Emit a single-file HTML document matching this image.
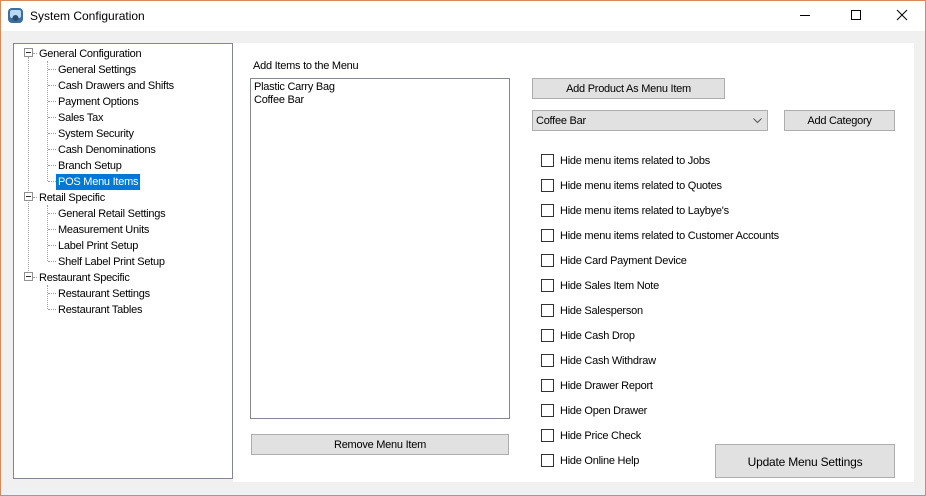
<!DOCTYPE html>
<html><head><meta charset="utf-8"><style>
*{margin:0;padding:0;box-sizing:border-box}
body{width:926px;height:496px;overflow:hidden;background:#f0f0f0;font-family:"Liberation Sans",Arial,sans-serif;font-size:11px;letter-spacing:-0.25px;color:#000;position:relative}
.a{position:absolute}
.win{left:0;top:0;width:926px;height:496px;border:1px solid #d9885a}
.title{left:1px;top:1px;width:924px;height:30px;background:#fff}
.btn{position:absolute;background:#e1e1e1;border:1px solid #adadad;font-size:11px;display:flex;align-items:center;justify-content:center;padding-top:1px}
.cb{position:absolute;left:541px;width:13px;height:13px;border:1px solid #333;background:#fff}
.cl{position:absolute;left:560px}
.t{position:absolute;white-space:nowrap;line-height:14px}
.vd{position:absolute;border-left:1px dotted #a0a0a0;width:0}
.hd{position:absolute;border-top:1px dotted #a0a0a0;height:0}
.pm{position:absolute;width:9px;height:9px;border:1px solid #919191;background:#fff}
.pm:after{content:"";position:absolute;left:1px;top:3px;width:5px;height:1px;background:#333}
</style></head><body>
<div class="a win"></div>
<div class="a title"></div>
<svg class="a" style="left:7px;top:7px" width="17" height="17" viewBox="0 0 17 17"><rect x="1" y="1" width="15" height="15" rx="4" fill="#3d6f9e"/><rect x="3" y="3" width="11" height="8" rx="2" fill="#b9d8f2"/><circle cx="8.5" cy="11" r="3" fill="#2a4d70"/></svg>
<div class="t" style="left:30px;top:9px;font-size:12px;letter-spacing:0">System Configuration</div>
<div class="a" style="left:800px;top:15px;width:10px;height:1px;background:#000"></div>
<div class="a" style="left:851px;top:10px;width:10px;height:10px;border:1px solid #000"></div>
<svg class="a" style="left:896px;top:9px" width="12" height="12"><path d="M1 1L11 11M11 1L1 11" stroke="#000" stroke-width="1"/></svg>

<div class="a" style="left:13px;top:43px;width:220px;height:436px;background:#fff;border:1px solid #828790"></div>
<div class="a" style="left:233px;top:43px;width:681px;height:439px;background:#fff"></div>

<div class="vd" style="left:28px;top:57px;height:222px"></div>
<div class="vd" style="left:47px;top:61px;height:120px"></div>
<div class="vd" style="left:47px;top:205px;height:56px"></div>
<div class="vd" style="left:47px;top:285px;height:24px"></div>
<div class="pm" style="left:24px;top:48px"></div>
<div class="pm" style="left:24px;top:192px"></div>
<div class="pm" style="left:24px;top:272px"></div>
<div class="hd" style="left:33px;top:53px;width:4px"></div>
<div class="hd" style="left:33px;top:197px;width:4px"></div>
<div class="hd" style="left:33px;top:277px;width:4px"></div>
<div class="t" style="left:39px;top:47px">General Configuration</div>
<div class="t" style="left:39px;top:191px">Retail Specific</div>
<div class="t" style="left:39px;top:271px">Restaurant Specific</div>
<div class="hd" style="left:48px;top:69px;width:8px"></div><div class="t" style="left:58px;top:63px">General Settings</div>
<div class="hd" style="left:48px;top:85px;width:8px"></div><div class="t" style="left:58px;top:79px">Cash Drawers and Shifts</div>
<div class="hd" style="left:48px;top:101px;width:8px"></div><div class="t" style="left:58px;top:95px">Payment Options</div>
<div class="hd" style="left:48px;top:117px;width:8px"></div><div class="t" style="left:58px;top:111px">Sales Tax</div>
<div class="hd" style="left:48px;top:133px;width:8px"></div><div class="t" style="left:58px;top:127px">System Security</div>
<div class="hd" style="left:48px;top:149px;width:8px"></div><div class="t" style="left:58px;top:143px">Cash Denominations</div>
<div class="hd" style="left:48px;top:165px;width:8px"></div><div class="t" style="left:58px;top:159px">Branch Setup</div>
<div class="hd" style="left:48px;top:181px;width:8px"></div><div class="t" style="left:56px;top:174px;background:#0078d7;color:#fff;padding:1px 2px">POS Menu Items</div>
<div class="hd" style="left:48px;top:213px;width:8px"></div><div class="t" style="left:58px;top:207px">General Retail Settings</div>
<div class="hd" style="left:48px;top:229px;width:8px"></div><div class="t" style="left:58px;top:223px">Measurement Units</div>
<div class="hd" style="left:48px;top:245px;width:8px"></div><div class="t" style="left:58px;top:239px">Label Print Setup</div>
<div class="hd" style="left:48px;top:261px;width:8px"></div><div class="t" style="left:58px;top:255px">Shelf Label Print Setup</div>
<div class="hd" style="left:48px;top:293px;width:8px"></div><div class="t" style="left:58px;top:287px">Restaurant Settings</div>
<div class="hd" style="left:48px;top:309px;width:8px"></div><div class="t" style="left:58px;top:303px">Restaurant Tables</div>

<div class="t" style="left:253px;top:59px">Add Items to the Menu</div>
<div class="a" style="left:250px;top:78px;width:260px;height:341px;border:1px solid #828790;background:#fff"></div>
<div class="t" style="left:254px;top:80px">Plastic Carry Bag</div>
<div class="t" style="left:254px;top:93px">Coffee Bar</div>
<div class="btn" style="left:251px;top:434px;width:258px;height:21px">Remove Menu Item</div>

<div class="btn" style="left:532px;top:78px;width:193px;height:21px">Add Product As Menu Item</div>
<div class="btn" style="left:532px;top:110px;width:236px;height:21px;justify-content:flex-start;padding-left:3px">Coffee Bar</div>
<svg class="a" style="left:753px;top:118px" width="9" height="6"><path d="M0.5 0.5L4.5 4.5L8.5 0.5" fill="none" stroke="#555"/></svg>
<div class="btn" style="left:784px;top:110px;width:111px;height:21px">Add Category</div>

<div class="cb" style="top:154px"></div><div class="t cl" style="top:154px">Hide menu items related to Jobs</div>
<div class="cb" style="top:179px"></div><div class="t cl" style="top:179px">Hide menu items related to Quotes</div>
<div class="cb" style="top:204px"></div><div class="t cl" style="top:204px">Hide menu items related to Laybye's</div>
<div class="cb" style="top:229px"></div><div class="t cl" style="top:229px">Hide menu items related to Customer Accounts</div>
<div class="cb" style="top:254px"></div><div class="t cl" style="top:254px">Hide Card Payment Device</div>
<div class="cb" style="top:279px"></div><div class="t cl" style="top:279px">Hide Sales Item Note</div>
<div class="cb" style="top:304px"></div><div class="t cl" style="top:304px">Hide Salesperson</div>
<div class="cb" style="top:329px"></div><div class="t cl" style="top:329px">Hide Cash Drop</div>
<div class="cb" style="top:354px"></div><div class="t cl" style="top:354px">Hide Cash Withdraw</div>
<div class="cb" style="top:379px"></div><div class="t cl" style="top:379px">Hide Drawer Report</div>
<div class="cb" style="top:404px"></div><div class="t cl" style="top:404px">Hide Open Drawer</div>
<div class="cb" style="top:429px"></div><div class="t cl" style="top:429px">Hide Price Check</div>
<div class="cb" style="top:454px"></div><div class="t cl" style="top:454px">Hide Online Help</div>
<div class="btn" style="left:715px;top:444px;width:180px;height:34px;font-size:12px;letter-spacing:-0.2px">Update Menu Settings</div>
</body></html>
